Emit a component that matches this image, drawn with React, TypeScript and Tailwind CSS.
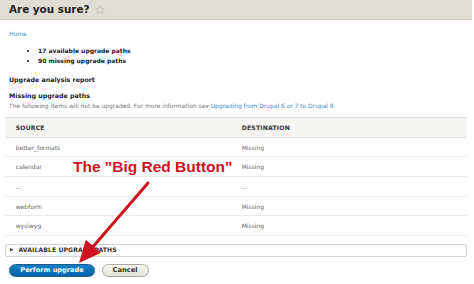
import { Star } from 'lucide-react';

const rows = [
  { source: 'better_formats', dest: 'Missing' },
  { source: 'calendar', dest: 'Missing' },
  { source: '...', dest: '...' },
  { source: 'webform', dest: 'Missing' },
  { source: 'wysiwyg', dest: 'Missing' },
];

export default function App() {
  return (
    <div className="relative w-[474px] h-[284px] overflow-hidden bg-white font-['DejaVu_Sans',sans-serif] text-[#333]">
      <header className="h-[20px] mr-[2px] flex items-center pl-[9px] bg-[#dfddd5] border-b border-[#cfccc3]">
        <h1 className="text-[10.4px] font-bold leading-none text-[#222]">Are you sure?</h1>
        <Star size={10} strokeWidth={1.5} className="ml-[5px] text-[#b3b1a8]" />
      </header>

      <main className="px-[9px]">
        <a className="block mt-[8.5px] text-[6px] leading-[10px] text-[#3a8fd1]">Home</a>

        <ul className="mt-[7.5px] pl-[29px] list-disc text-[6px] leading-[10px] font-bold text-[#222]">
          <li>17 available upgrade paths</li>
          <li>90 missing upgrade paths</li>
        </ul>

        <h2 className="mt-[9px] text-[6.3px] leading-[10px] font-bold text-[#222]">Upgrade analysis report</h2>
        <h3 className="mt-[5.5px] text-[6.3px] leading-[10px] font-bold text-[#222]">Missing upgrade paths</h3>
        <p className="mt-[0.5px] text-[5.95px] leading-[10px] text-[#777] whitespace-nowrap">
          The following items will not be upgraded. For more information see{' '}
          <a className="text-[#3a8fd1]">Upgrading from Drupal 6 or 7 to Drupal 8.</a>
        </p>

        <table className="mt-[5.7px] -ml-[4px] w-[462px] border-collapse table-fixed">
          <thead>
            <tr className="h-[20px] bg-[#f5f5f2] border-y border-[#e2e1dc]">
              <th className="w-[226px] pl-[10.7px] text-left text-[6.1px] font-bold tracking-[0.2px] text-[#333]">SOURCE</th>
              <th className="pl-[10.7px] text-left text-[6.1px] font-bold tracking-[0.2px] text-[#333]">DESTINATION</th>
            </tr>
          </thead>
          <tbody>
            {rows.map((r, i) => (
              <tr key={i} className="h-[19.7px] border-b border-[#ecebe7]">
                <td className="pl-[10.7px] text-[6px] text-[#666]">{r.source}</td>
                <td className="pl-[10.7px] text-[6px] text-[#666]">{r.dest}</td>
              </tr>
            ))}
          </tbody>
        </table>

        <div className="mt-[7.5px] -ml-[4px] w-[462px] h-[13.5px] flex items-center pl-[4px] border border-[#d4d4d0] rounded-[2px]">
          <span className="text-[4.5px] leading-none text-[#333]">▶</span>
          <span className="ml-[5px] text-[6.1px] font-bold leading-none tracking-[0.1px] text-[#333]">AVAILABLE UPGRADE PATHS</span>
        </div>

        <div className="mt-[6.5px] flex gap-[6.5px]">
          <button className="w-[86px] h-[13.5px] rounded-full bg-gradient-to-b from-[#1580c6] to-[#0062ac] border border-[#1b5a8e] text-white text-[6.6px] font-bold leading-none">
            Perform upgrade
          </button>
          <button className="w-[47px] h-[13.5px] rounded-full bg-gradient-to-b from-[#f8f7f3] to-[#e4e2dc] border border-[#a9a8a2] text-[#333] text-[6.7px] font-bold leading-none">
            Cancel
          </button>
        </div>
      </main>

      <div className="absolute left-[73px] top-[159px] text-[15.5px] leading-none font-bold text-[#d0121e] font-['Liberation_Sans',Arial,sans-serif] whitespace-nowrap">
        The "Big Red Button"
      </div>
      <svg className="absolute inset-0 pointer-events-none" width={474} height={284}>
        <line x1={148} y1={183} x2={93.4} y2={246.3} stroke="#d0121e" strokeWidth={3} strokeLinecap="round" />
        <polygon points="79,263 101,252.8 85.8,239.8" fill="#d0121e" />
      </svg>
    </div>
  );
}
